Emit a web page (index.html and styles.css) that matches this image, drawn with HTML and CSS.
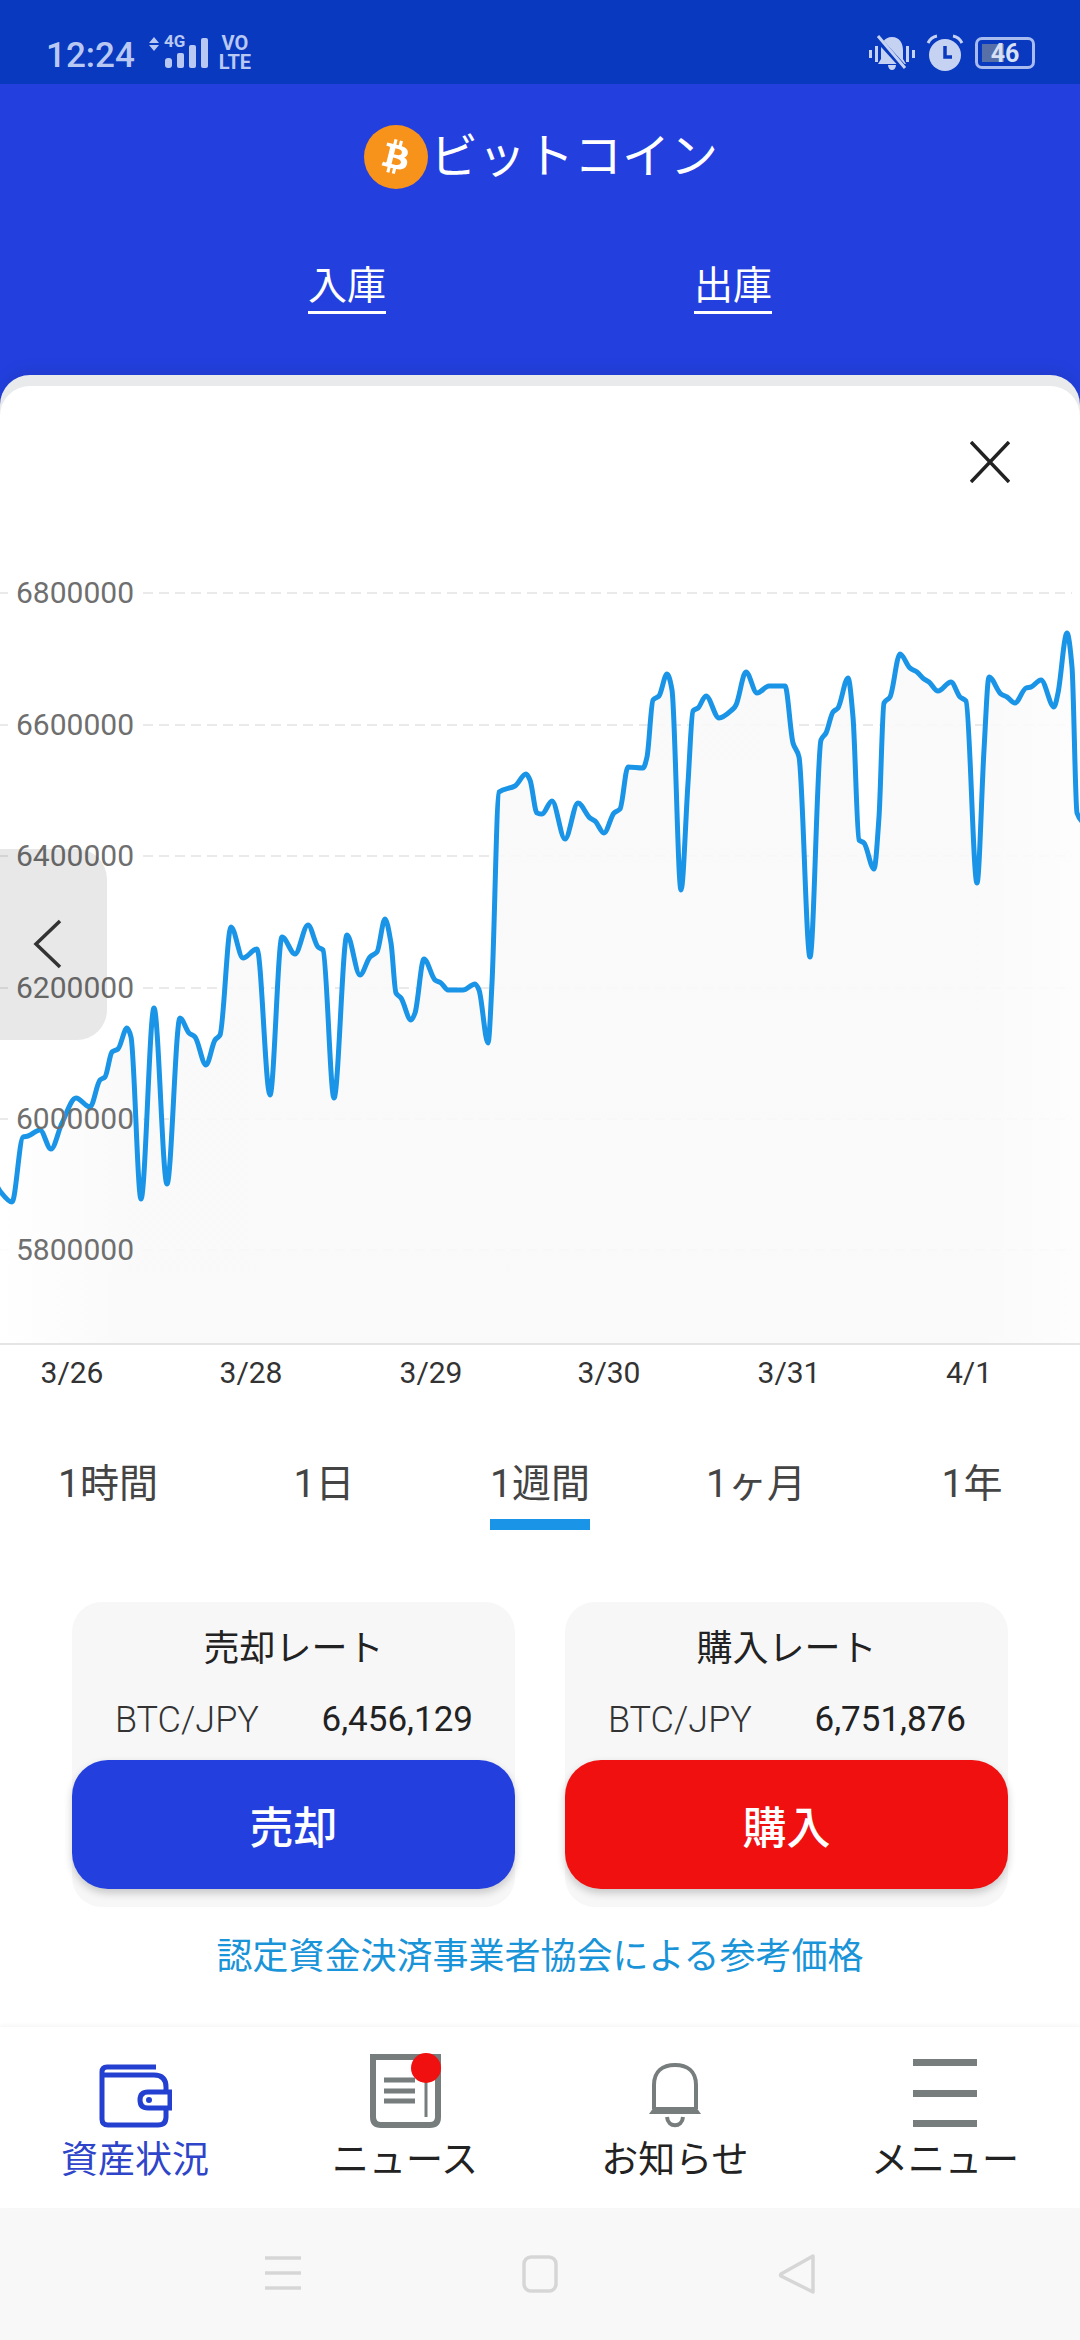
FILE: index.html
```html
<!DOCTYPE html>
<html lang="ja">
<head>
  <meta charset="UTF-8">
  <meta name="viewport" content="width=device-width, initial-scale=1.0">
  <title>ビットコイン</title>
  <link rel="stylesheet" href="styles.css">
</head>
<body>

<div class="status">
  <div class="status-left">
    <span class="clock-text">12:24</span>
    <svg class="net" width="62" height="38" viewBox="0 0 62 38">
      <path d="M2 9 L7 3 L12 9 Z M2 11 L12 11 L7 17 Z" fill="#b9c8f2"/>
      <rect x="18" y="24" width="7" height="10" rx="3" fill="#b9c8f2"/>
      <rect x="30" y="19" width="7" height="15" rx="2" fill="#b9c8f2"/>
      <rect x="42" y="11" width="7" height="23" rx="2" fill="#b9c8f2"/>
      <rect x="54" y="4" width="7" height="30" rx="2" fill="#b9c8f2"/>
    </svg>
    <span class="net-4g">4G</span>
    <div class="net-vo"><span>VO</span><span>LTE</span></div>
  </div>
  <div class="status-right">
    <svg width="46" height="36" viewBox="0 0 46 36">
      <rect x="0" y="15" width="3" height="8" fill="#c6d2f2"/>
      <rect x="6" y="11" width="3" height="16" fill="#c6d2f2"/>
      <rect x="37" y="11" width="3" height="16" fill="#c6d2f2"/>
      <rect x="43" y="15" width="3" height="8" fill="#c6d2f2"/>
      <path d="M23 2 C31 2 34 9 34 15 L34 24 L37 29 L9 29 L12 24 L12 15 C12 9 15 2 23 2 Z M19 30 L27 30 C27 33 25 35 23 35 C21 35 19 33 19 30 Z" fill="#c6d2f2"/>
      <path d="M8 3 L37 35" stroke="#0839be" stroke-width="6"/>
      <path d="M9 1 L36 33" stroke="#c6d2f2" stroke-width="3"/>
    </svg>
    <svg width="38" height="38" viewBox="0 0 38 38">
      <circle cx="19" cy="21" r="16" fill="#c6d2f2"/>
      <path d="M19 12 V23 H26" fill="none" stroke="#0839be" stroke-width="3.5"/>
      <path d="M2 9 Q5 3 11 2 M36 9 Q33 3 27 2" fill="none" stroke="#c6d2f2" stroke-width="3"/>
    </svg>
    <div class="battery">
      <span class="battery-level"></span>
      <span class="battery-text">46</span>
    </div>
  </div>
</div>

<div class="header">
  <div class="title-row">
    <svg class="coin" width="64" height="64" viewBox="0 0 64 64">
      <circle cx="32" cy="32" r="32" fill="#f7931a"/>
      <g transform="translate(4.5 4.5) scale(2.3)">
        <path fill="#fff" d="M17.09 10.28c.24-1.59-.97-2.44-2.63-3.01l.54-2.16-1.32-.33-.52 2.1c-.35-.09-.7-.17-1.06-.25l.53-2.12-1.31-.33-.54 2.16c-.29-.07-.57-.13-.84-.2l-1.81-.45-.35 1.4s.97.22.95.24c.53.13.63.48.61.76l-.61 2.46c.04.01.08.02.14.05l-.14-.04-.86 3.44c-.07.16-.23.4-.6.31.01.02-.96-.24-.96-.24l-.65 1.5 1.71.43c.32.08.63.16.94.24l-.55 2.19 1.31.33.54-2.17c.36.1.71.19 1.05.27l-.54 2.16 1.32.33.55-2.19c2.25.43 3.95.25 4.66-1.78.57-1.64-.03-2.58-1.21-3.2.86-.2 1.51-.77 1.68-1.94zm-3.02 4.23c-.41 1.64-3.16.75-4.06.53l.73-2.91c.89.22 3.75.66 3.33 2.38zm.41-4.26c-.37 1.49-2.66.73-3.4.55l.66-2.64c.74.18 3.13.53 2.74 2.09z"/>
      </g>
    </svg>
    <span class="title">ビットコイン</span>
  </div>
  <div class="transfer">
    <a class="transfer-link">入庫</a>
    <a class="transfer-link">出庫</a>
  </div>
</div>

<div class="sheet">
  <div class="sheet-inner">
    <div class="close-row">
      <svg width="40" height="42" viewBox="0 0 40 42">
        <path d="M1 1 L39 41 M39 1 L1 41" stroke="#222" stroke-width="3.5"/>
      </svg>
    </div>

    <div class="chart">
      <svg width="1080" height="860" viewBox="0 540 1080 860">
        <defs>
          <linearGradient id="areaFade" x1="0" y1="0" x2="1" y2="0">
            <stop offset="0" stop-color="#fff"/>
            <stop offset="0.12" stop-color="#f9f9f9"/>
            <stop offset="0.9" stop-color="#f9f9f9"/>
            <stop offset="1" stop-color="#fdfdfd"/>
          </linearGradient>
        </defs>
        <g class="grid">
          <path d="M0 593 H8 M143 593 H1072"/>
          <path d="M0 725 H8 M143 725 H1072"/>
          <path d="M0 856 H8 M143 856 H1072"/>
          <path d="M0 988 H8 M143 988 H1072"/>
          <path d="M0 1119 H8 M143 1119 H1072"/>
          <path d="M0 1250 H8 M143 1250 H1072"/>
        </g>
        <path id="priceArea" fill="url(#areaFade)" opacity="0.9"/>
        <path id="priceLine" fill="none" stroke="#1a94e6" stroke-width="5" stroke-linejoin="round"/>
        <path class="axis" d="M0 1344 H1080"/>
        <g class="y-labels">
          <text x="16" y="603">6800000</text>
          <text x="16" y="735">6600000</text>
          <text x="16" y="866">6400000</text>
          <text x="16" y="998">6200000</text>
          <text x="16" y="1129">6000000</text>
          <text x="16" y="1260">5800000</text>
        </g>
        <g class="x-labels">
          <text x="72" y="1383">3/26</text>
          <text x="251" y="1383">3/28</text>
          <text x="431" y="1383">3/29</text>
          <text x="609" y="1383">3/30</text>
          <text x="789" y="1383">3/31</text>
          <text x="969" y="1383">4/1</text>
        </g>
      </svg>
      <div class="chart-back">
        <svg width="30" height="52" viewBox="0 0 30 52">
          <path d="M27 2 L3 25 L27 48" fill="none" stroke="#333" stroke-width="3.5"/>
        </svg>
      </div>
    </div>

    <div class="periods">
      <div class="period"><span>1時間</span></div>
      <div class="period"><span>1日</span></div>
      <div class="period active"><span>1週間</span></div>
      <div class="period"><span>1ヶ月</span></div>
      <div class="period"><span>1年</span></div>
    </div>

    <div class="rates">
      <div class="rate">
        <div class="rate-title">売却レート</div>
        <div class="rate-row"><span class="rate-pair">BTC/JPY</span><span class="rate-value">6,456,129</span></div>
        <div class="rate-btn sell">売却</div>
      </div>
      <div class="rate">
        <div class="rate-title">購入レート</div>
        <div class="rate-row"><span class="rate-pair">BTC/JPY</span><span class="rate-value">6,751,876</span></div>
        <div class="rate-btn buy">購入</div>
      </div>
    </div>

    <div class="note">認定資金決済事業者協会による参考価格</div>
  </div>
</div>

<div class="nav">
  <div class="nav-item active">
    <div class="nav-icon">
      <svg width="74" height="66" viewBox="0 0 74 66">
        <g fill="none" stroke="#2340d0" stroke-width="5">
          <path d="M58 4 H9 Q4 4 4 9 V56 Q4 62 10 62 H60 Q68 62 68 54 V46"/>
          <path d="M6 12 H56 Q68 12 68 24 V28"/>
          <path d="M72 29 H50 Q42 29 42 37 Q42 45 50 45 H72 Z"/>
        </g>
        <circle cx="51" cy="37" r="3" fill="#2340d0"/>
      </svg>
    </div>
    <span>資産状況</span>
  </div>
  <div class="nav-item">
    <div class="nav-icon news-icon">
      <svg width="76" height="78" viewBox="0 0 76 78">
        <g fill="none" stroke="#777d7d">
          <path d="M3 6 H68 V66 Q68 74 60 74 H11 Q3 74 3 66 Z" stroke-width="6"/>
          <path d="M14 29 H45 M14 40 H45 M14 50 H45" stroke-width="5"/>
          <path d="M56 30 V66" stroke-width="3"/>
        </g>
        <circle cx="56" cy="17" r="15" fill="#f01010"/>
      </svg>
    </div>
    <span>ニュース</span>
  </div>
  <div class="nav-item">
    <div class="nav-icon">
      <svg width="54" height="66" viewBox="0 0 54 66">
        <g fill="none" stroke="#777d7d" stroke-width="4">
          <path d="M6 46 V22 C6 8 15 2 27 2 C39 2 48 8 48 22 V46"/>
          <path d="M19 54 C20 65 34 65 35 54"/>
        </g>
        <path d="M6 44 H48 L53 51 H1 Z" fill="#777d7d"/>
      </svg>
    </div>
    <span>お知らせ</span>
  </div>
  <div class="nav-item">
    <div class="nav-icon">
      <svg width="64" height="70" viewBox="0 0 64 70">
        <rect y="0" width="64" height="7" fill="#777d7d"/>
        <rect y="31" width="64" height="7" fill="#777d7d"/>
        <rect y="61" width="64" height="7" fill="#777d7d"/>
      </svg>
    </div>
    <span>メニュー</span>
  </div>
</div>

<div class="sysnav">
  <svg width="38" height="36" viewBox="0 0 38 36">
    <path d="M1 2 H37 M1 17 H37 M1 32 H37" stroke="#d6d6d6" stroke-width="3.5"/>
  </svg>
  <svg width="36" height="38" viewBox="0 0 36 38">
    <rect x="2" y="2" width="32" height="34" rx="7" fill="none" stroke="#d6d6d6" stroke-width="3.5"/>
  </svg>
  <svg width="38" height="40" viewBox="0 0 38 40">
    <path d="M35 2 L3 20 Q2 21 3 22 L35 38 Z" fill="none" stroke="#d6d6d6" stroke-width="3.5" stroke-linejoin="round"/>
  </svg>
</div>

<script src="chart.js"></script>
</body>
</html>
```

FILE: styles.css
```css
* { margin:0; padding:0; box-sizing:border-box; }

body { width:1080px; height:2340px; overflow:hidden; background:#fff; color:#222; font-family:Roboto, "Noto Sans CJK JP", sans-serif; }

.status { height:84px; background:#0839be; display:flex; justify-content:space-between; align-items:center; padding:22px 45px 0 46px; }
.status-left { display:flex; align-items:center; gap:12px; position:relative; }
.status-right { display:flex; align-items:center; gap:11px; }
.clock-text { font-size:35px; font-weight:500; color:#b9c8f2; padding-top:4px; }
.net-4g { position:absolute; left:118px; top:1px; font-size:17px; line-height:18px; font-weight:700; color:#b9c8f2; }
.net-vo { display:flex; flex-direction:column; align-items:center; font-size:20px; line-height:19px; font-weight:700; color:#b9c8f2; margin-left:-2px; }

.battery { width:60px; height:32px; border:3px solid #a9bcf0; border-radius:7px; position:relative; display:flex; align-items:center; justify-content:center; }
.battery-level { position:absolute; left:4px; top:4px; bottom:4px; width:22px; background:#5870a8; }
.battery-text { position:relative; font-size:25px; font-weight:700; color:#d8e0f6; }

.header { height:321px; background:#2340df; color:#fff; }
.title-row { display:flex; align-items:center; justify-content:center; gap:2px; padding:40px 0 0 2px; }
.title { font-size:48px; line-height:66px; }
.transfer { display:flex; justify-content:center; gap:308px; margin-top:71px; }
.transfer-link { font-size:39px; line-height:50px; border-bottom:3px solid #fff; }

.sheet { height:1652px; margin-top:-30px; padding-top:11px; background:#e8eaec; border-radius:30px 30px 0 0; position:relative; box-shadow:0 -6px 14px rgba(0,0,0,.08); }
.sheet-inner { height:1641px; background:#fff; border-radius:30px 30px 0 0; }

.close-row { height:154px; display:flex; justify-content:flex-end; padding:55px 70px 0 0; }

.chart { height:860px; position:relative; }
.chart svg { display:block; }
.grid path { fill:none; stroke:#e3e3e3; stroke-width:1.5; stroke-dasharray:10 6; }
.axis { fill:none; stroke:#ddd; stroke-width:1.5; }
.y-labels text { font-size:30px; fill:#6f6f6f; }
.x-labels text { font-size:30px; fill:#333; text-anchor:middle; }
.chart-back { position:absolute; left:0; top:309px; width:107px; height:191px; background:rgba(0,0,0,.09); border-radius:0 30px 30px 0; display:flex; align-items:center; padding-left:33px; }

.periods { display:grid; grid-template-columns:repeat(5, 216px); margin-top:57px; }
.period { text-align:center; font-size:39px; color:#444; }
.period span { display:inline-block; line-height:54px; padding-bottom:8px; border-bottom:11px solid transparent; }
.period.active span { border-bottom-color:#1a94e6; }

.rates { display:grid; grid-template-columns:443px 443px; gap:50px; padding:0 72px; margin-top:72px; }
.rate { height:305px; background:#f7f7f8; border-radius:30px; }
.rate-title { font-size:36px; line-height:48px; text-align:center; padding-top:23px; height:70px; color:#222; }
.rate-row { display:flex; justify-content:space-between; align-items:center; padding:0 42px 0 43px; line-height:48px; margin-top:24px; }
.rate-pair { font-size:36px; font-weight:300; color:#333; }
.rate-value { font-size:35px; color:#222; }
.rate-btn { height:129px; margin-top:16px; border-radius:36px; color:#fff; font-size:44px; font-weight:500; display:flex; align-items:center; justify-content:center; box-shadow:0 4px 8px rgba(0,0,0,.2); }
.sell { background:#2340df; }
.buy { background:#f01010; }

.note { margin-top:24px; text-align:center; font-size:36px; line-height:52px; color:#1a94d8; }

.nav { height:181px; background:#fff; display:grid; grid-template-columns:repeat(4, 270px); box-shadow:0 -2px 4px rgba(0,0,0,.04); position:relative; }
.nav-item { display:flex; flex-direction:column; align-items:center; font-size:37px; line-height:50px; color:#222; }
.nav-item.active { color:#2e45c9; }
.nav-icon { height:109px; display:flex; align-items:flex-end; padding-bottom:7px; }
.news-icon { margin-left:6px; }

.sysnav { height:132px; background:#f8f8f8; display:flex; align-items:center; justify-content:center; gap:220px; }
```

FILE: chart.js
```js
// x, y in page coordinates, same numbers as the svg viewBox
const points = [
  [-4,1184],[0,1191],[12,1202],[23,1137],[28,1136],[40,1130],[51,1149],[62,1123],[76,1098],[90,1107],
  [100,1080],[105,1077],[112,1052],[118,1049],[127,1028],[131,1037],[141,1199],[154,1008],[167,1184],[180,1018],
  [189,1033],[195,1037],[206,1065],[215,1040],[220,1035],[231,927],[243,958],[257,949],[270,1095],[282,937],
  [295,954],[308,925],[318,947],[323,950],[334,1098],[347,935],[360,975],[370,957],[377,952],[385,919],
  [391,943],[396,993],[401,998],[411,1020],[415,1013],[424,959],[435,980],[441,983],[448,990],[463,990],
  [475,984],[479,990],[488,1043],[492,983],[499,792],[515,786],[526,774],[530,780],[537,813],[542,814],
  [552,801],[565,839],[578,803],[590,818],[595,821],[604,833],[614,813],[620,809],[628,767],[643,768],
  [647,757],[653,700],[659,696],[667,674],[672,690],[681,890],[688,783],[693,711],[698,708],[706,696],
  [719,718],[733,709],[736,705],[746,672],[757,693],[769,686],[785,686],[793,743],[799,757],[810,957],
  [821,740],[826,733],[833,712],[838,708],[848,678],[853,717],[859,840],[864,843],[874,869],[879,817],
  [884,703],[890,697],[900,654],[910,668],[917,672],[924,679],[929,682],[938,691],[951,682],[960,697],
  [966,701],[977,883],[984,750],[989,677],[1001,694],[1007,697],[1015,703],[1026,688],[1031,687],[1041,680],
  [1054,707],[1058,693],[1067,633],[1072,667],[1077,813],[1084,824]
]

// monotone curve, flat at every peak and dip
function buildPath(p) {
  const slopes = []
  for (let i=0; i<p.length-1; ++i) {
    slopes.push((p[i+1][1]-p[i][1]) / (p[i+1][0]-p[i][0]))
  }

  const tangents = [slopes[0]]
  for (let i=1; i<p.length-1; ++i) {
    const a = slopes[i-1]
    const b = slopes[i]
    tangents.push(a*b <= 0 ? 0 : 2*a*b/(a+b))
  }
  tangents.push(slopes[slopes.length-1])

  let d = `M${p[0][0]} ${p[0][1]}`
  for (let i=0; i<p.length-1; ++i) {
    const dx = (p[i+1][0]-p[i][0]) / 3
    d += ` C${p[i][0]+dx} ${p[i][1]+tangents[i]*dx} ${p[i+1][0]-dx} ${p[i+1][1]-tangents[i+1]*dx} ${p[i+1][0]} ${p[i+1][1]}`
  }
  return d
}

const linePath = buildPath(points)
document.getElementById('priceLine').setAttribute('d', linePath)
document.getElementById('priceArea').setAttribute('d', linePath + ' L1084 1344 L-4 1344 Z')
```
